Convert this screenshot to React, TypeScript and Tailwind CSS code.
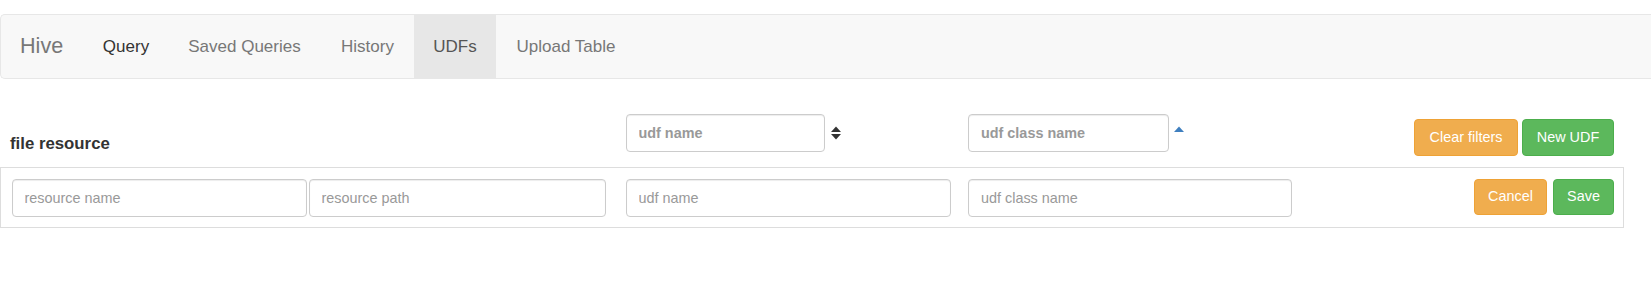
import React from 'react';

const navLinks = [
  { label: 'Query', w: 'w-[84px]', cls: 'text-[#333]' },
  { label: 'Saved Queries', w: 'w-[153px]', cls: 'text-[#777]' },
  { label: 'History', w: 'w-[93px]', cls: 'text-[#777]' },
  { label: 'UDFs', w: 'w-[82px]', cls: 'text-[#555] bg-[#e7e7e7]' },
  { label: 'Upload Table', w: 'w-[140px]', cls: 'text-[#777]' },
];

function SortIcon() {
  return (
    <svg width="10" height="16" viewBox="0 0 10 16" className="shrink-0">
      <polygon points="0,7 5,1.5 10,7" fill="#333" />
      <polygon points="0,9 5,14.5 10,9" fill="#333" />
    </svg>
  );
}

function SortAscIcon() {
  return (
    <svg width="10" height="16" viewBox="0 0 10 16" className="shrink-0">
      <polygon points="0,7 5,1.5 10,7" fill="#3f7fbf" />
    </svg>
  );
}

const inputBase =
  'h-[38px] rounded-[4px] border border-[#ccc] bg-white px-[12px] text-[14.4px] text-[#555] outline-none placeholder:text-[#999] shadow-[inset_0_1px_1px_rgba(0,0,0,0.075)]';

export default function App() {
  return (
    <div className="w-[1651px] h-[286px] overflow-hidden bg-white pt-[14px] font-['Liberation_Sans',Arial,sans-serif] text-[#333]">
      {/* navbar */}
      <nav className="flex h-[65px] items-stretch rounded-l-[5px] border border-r-0 border-[#e7e7e7] bg-[#f8f8f8]">
        <a className="flex w-[83px] items-center pl-[19px] text-[21.6px] text-[#777]">Hive</a>
        {navLinks.map((l) => (
          <a key={l.label} className={`flex items-center justify-center text-[17px] ${l.w} ${l.cls}`}>
            {l.label}
          </a>
        ))}
      </nav>

      {/* filter header */}
      <div className="mt-[34px] flex h-[44px]">
        <div className="w-[616px] pl-[10px] pt-[19px]">
          <span className="text-[16.8px] font-bold leading-[24px]">file resource</span>
        </div>
        <div className="mt-[1px] flex h-[38px] w-[342px] items-center gap-[6px] pl-[9.5px]">
          <input className={`${inputBase} w-[199px] placeholder:font-bold`} placeholder="udf name" />
          <SortIcon />
        </div>
        <div className="mt-[1px] flex h-[38px] w-[342px] items-center gap-[5px] pl-[10px]">
          <input className={`${inputBase} w-[201px] placeholder:font-bold`} placeholder="udf class name" />
          <SortAscIcon />
        </div>
        <div className="flex flex-1 justify-end gap-[4px] pr-[37px] pt-[6px]">
          <button className="h-[37px] w-[104px] rounded-[4px] border border-[#eea236] bg-[#f0ad4e] text-[14.4px] text-white">
            Clear filters
          </button>
          <button className="h-[37px] w-[92px] rounded-[4px] border border-[#4cae4c] bg-[#5cb85c] text-[14.4px] text-white">
            New UDF
          </button>
        </div>
      </div>

      {/* new udf row */}
      <div className="mt-[10px] flex h-[61px] w-[1624px] border border-[#ddd] pt-[11px]">
        <div className="flex w-[615px] gap-[2px] pl-[10.5px]">
          <input className={`${inputBase} h-[37px] w-[295px]`} placeholder="resource name" />
          <input className={`${inputBase} h-[37px] w-[297px]`} placeholder="resource path" />
        </div>
        <div className="w-[342px] pl-[9.5px]">
          <input className={`${inputBase} h-[37px] w-[325px]`} placeholder="udf name" />
        </div>
        <div className="w-[342px] pl-[10px]">
          <input className={`${inputBase} h-[37px] w-[324px]`} placeholder="udf class name" />
        </div>
        <div className="flex flex-1 justify-end gap-[6px] pr-[9px]">
          <button className="h-[36px] w-[73px] rounded-[4px] border border-[#eea236] bg-[#f0ad4e] text-[14.4px] text-white">
            Cancel
          </button>
          <button className="h-[36px] w-[61px] rounded-[4px] border border-[#4cae4c] bg-[#5cb85c] text-[14.4px] text-white">
            Save
          </button>
        </div>
      </div>
    </div>
  );
}
